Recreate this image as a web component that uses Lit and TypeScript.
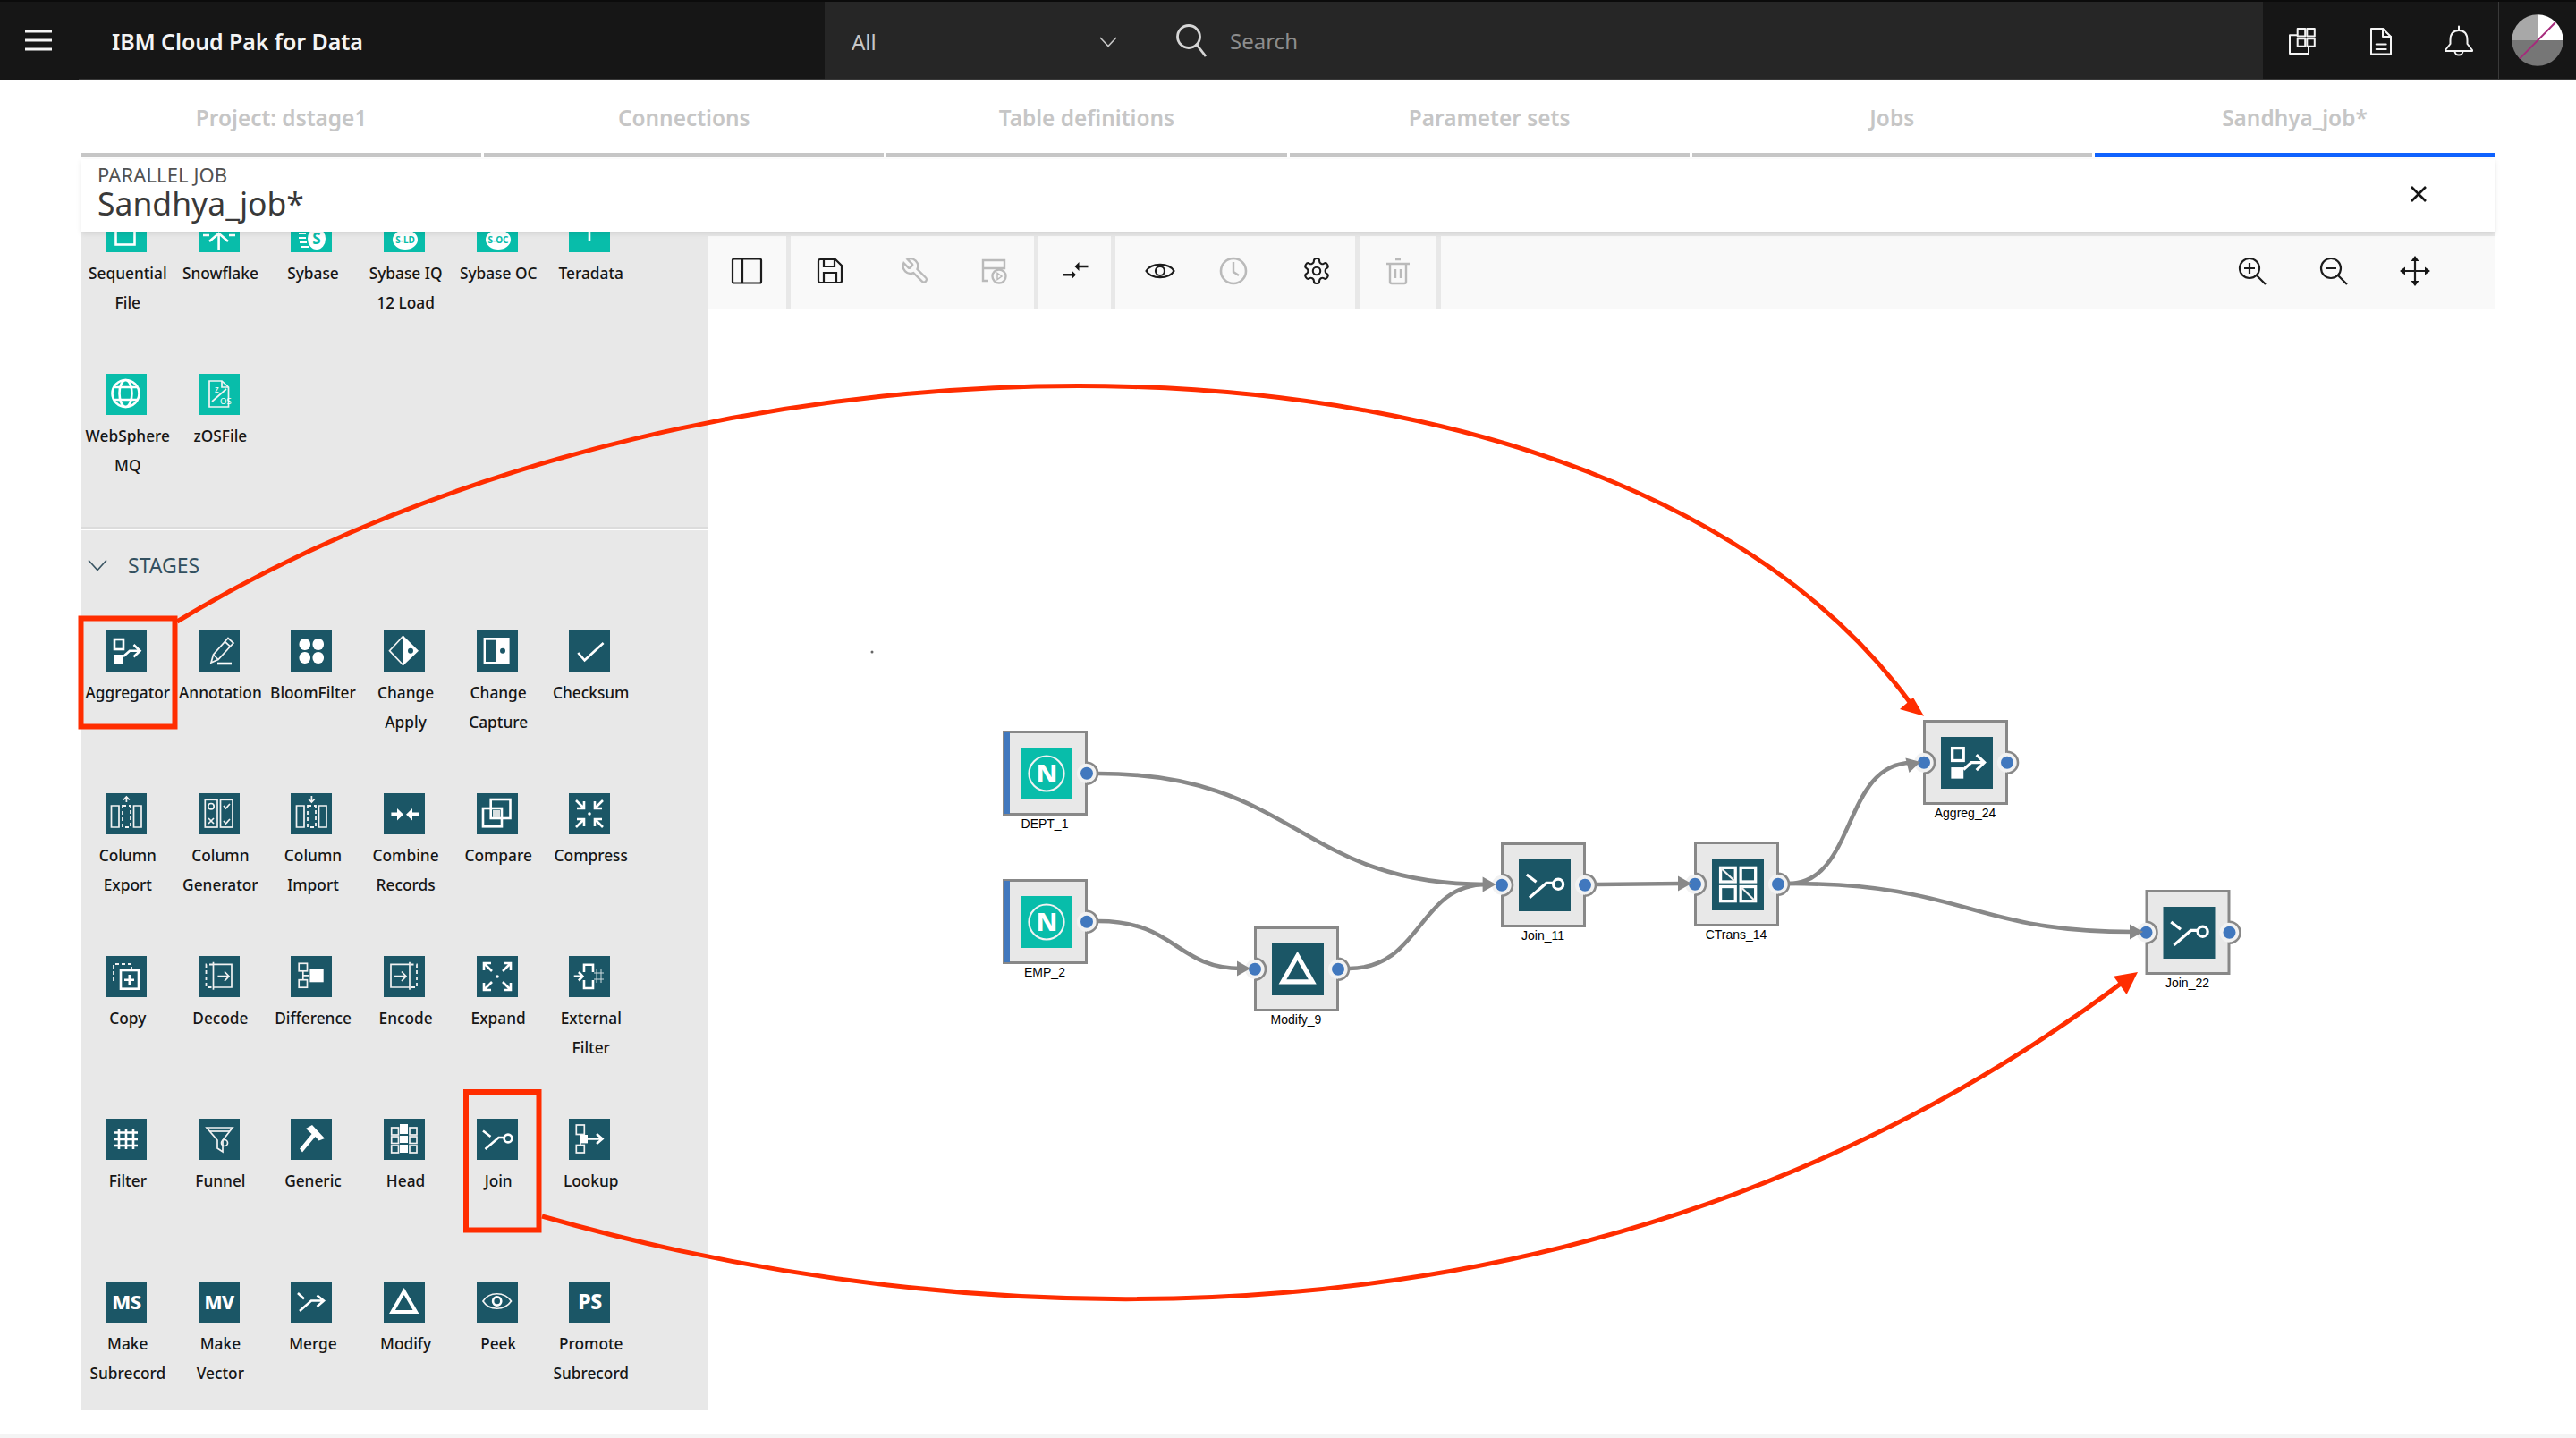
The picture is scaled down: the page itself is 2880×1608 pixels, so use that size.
import { LitElement, html, css, svg } from "lit";
import { customElement } from "lit/decorators.js";

const s = (strings: TemplateStringsArray, ...v: unknown[]) => svg(strings, ...v);

const ICONS: Record<string, unknown> = {
  seq: s`<rect class="l" x="11.5" y="8" width="21" height="29.5"/>`,
  snow: s`<path class="l" d="M22.6 24V44M12 34L22.6 25L33 34M5 27H12M34 27H41"/>`,
  sybase: s`<ellipse class="f" cx="29" cy="31" rx="10" ry="12"/><path class="t" d="M9 25H17M9 30H17M10 35H18M12 40H20"/><text class="it" x="29" y="37" font-size="17">S</text>`,
  sybaseiq: s`<ellipse class="f" cx="24" cy="32" rx="14" ry="11"/><text class="it" x="24" y="36" font-size="10">S-LD</text>`,
  sybaseoc: s`<ellipse class="f" cx="24" cy="32" rx="14" ry="11"/><text class="it" x="24" y="36" font-size="10">S-OC</text>`,
  teradata: s`<path class="l" d="M12 12H34M23 12V33"/>`,
  web: s`<circle class="l" cx="22.5" cy="22" r="15"/><ellipse class="l" cx="22.5" cy="22" rx="7" ry="15"/><path class="l" d="M9 15H36M9 29H36"/>`,
  zos: s`<path class="n" d="M12 8H26L33.5 15V37H12Z"/><path class="n" d="M26 8V15H33.5M15 31L31 17"/><text class="wt" x="18" y="21" font-size="10">z</text><text class="wt" x="24" y="34" font-size="9.5">OS</text>`,
  agg: s`<rect class="l" x="10" y="10" width="10" height="11"/><rect class="f" x="9" y="27" width="11" height="10"/><path class="l" d="M20 29L27 22.7H38M31.5 16L38.5 22.7L31.5 29.5"/>`,
  ann: s`<path class="n" d="M14 36L16.5 27L33 8.5L39 14L22 32.5ZM16.5 27L22 32.5M29.5 12.5L35.5 18"/><path class="l" d="M21 37H37"/>`,
  bloom: s`<rect class="f" x="9.5" y="9" width="12.5" height="13" rx="6"/><rect class="f" x="24.5" y="9" width="12.5" height="13" rx="6"/><rect class="f" x="9.5" y="24" width="12.5" height="13" rx="6"/><rect class="f" x="24.5" y="24" width="12.5" height="13" rx="6"/>`,
  apply: s`<path class="n" d="M22 6L6.5 22.7L22 39"/><path class="f" d="M22 6L39 22.7L22 39Z"/><circle class="d" cx="30" cy="22.7" r="3"/>`,
  capture: s`<rect class="f" x="7.6" y="8" width="29" height="29.7"/><rect class="d" x="10" y="10.7" width="12" height="24.3"/><circle class="d" cx="29" cy="22.7" r="3"/>`,
  check: s`<path class="l" d="M10.3 25L17.6 33.3L38.6 14"/>`,
  colexp: s`<path class="n" d="M6.5 14H15V38H6.5ZM31.5 14H40V38H31.5Z"/><path class="dash" d="M19 14H28V38H19Z"/><path class="n" d="M23.4 10V4M20 7.5L23.4 4L26.8 7.5"/>`,
  colgen: s`<rect class="n" x="7.3" y="7.3" width="13.7" height="30.7"/><rect class="n" x="24.5" y="7.3" width="13.5" height="30.7"/><circle class="n" cx="14" cy="14.7" r="3.2"/><path class="n" d="M11 28L17 34M17 28L11 34M28 14L30.5 17L35 12M28 31L30.5 34L35 29"/>`,
  colimp: s`<path class="n" d="M6.5 14H15V38H6.5ZM31.5 14H40V38H31.5Z"/><path class="dash" d="M19 14H28V38H19Z"/><path class="n" d="M23.4 3V9.5M20 6.5L23.4 10L26.8 6.5"/>`,
  combine: s`<path class="f" d="M8.4 21.5H15V17L22 23.7L15 30.5V26H8.4ZM39 21.5H32V17L25 23.7L32 30.5V26H39Z"/>`,
  compare: s`<rect class="l" x="15.7" y="7" width="21.8" height="21"/><rect class="l" x="7" y="17" width="21" height="20.3"/><rect class="p" x="18" y="19" width="8" height="8"/>`,
  compress: s`<path class="l" d="M8 8L17 17M17 9V17H9M38 8L29 17M29 9V17H37M8 38L17 29M17 37V29H9M38 38L29 29M29 37V29H37"/><circle class="f" cx="23" cy="23" r="1.8"/>`,
  copy: s`<path class="dash" d="M9 28V9H29V14"/><rect class="l" x="17" y="16" width="20" height="20.7"/><path class="l" d="M26.8 21V32M21 26.7H32"/>`,
  decode: s`<path class="dash" d="M16 9.5H8.5V35H16"/><path class="n" d="M16.5 6.7V37.7M16.5 9.3H37V35H16.5M21.4 22.7H34M29 17.5L34 22.7L29 28"/>`,
  diff: s`<rect class="n" x="9.2" y="8.3" width="9.3" height="8.5"/><rect class="n" x="9.2" y="26.7" width="9.3" height="8.5"/><path class="n" d="M13.8 17V26.7M13.8 21.8H21"/><rect class="f" x="21.4" y="14.3" width="15.3" height="15"/>`,
  encode: s`<path class="dash" d="M29.5 9.5H37V35H29.5"/><path class="n" d="M29 6.7V37.7M29 9.3H8V35H29M12 22.7H25M20 17.5L25 22.7L20 28"/>`,
  expand: s`<path class="l" d="M17 17L8 8M8 16V8H16M29 17L38 8M38 16V8H30M17 29L8 38M8 30V38H16M29 29L38 38M38 30V38H30"/><circle class="f" cx="23" cy="23" r="1.8"/>`,
  ext: s`<path class="l" d="M5.7 22.7H15M11 18L15.4 22.7L11 27.5M17 18V9.7H27V18M17 27V36H27V27"/><path class="thin" d="M28 19H39M28 26H39M31 15V30M36 15V30"/>`,
  filter: s`<path class="l" d="M15 11V34M23 11V34M31 11V34M10 15.5H36M10 23H36M10 30H36"/>`,
  funnel: s`<path class="n" d="M9 10H38L27 24V37L21 33V24Z"/><path class="n" d="M12 14H35"/><circle class="n" cx="29" cy="27" r="3.5"/>`,
  generic: s`<path class="f" d="M17 11L24 7L38 22L31.5 24.5L27.5 20L13 37.5L10 33.5L23.5 17Z"/>`,
  head: s`<rect class="n" x="8.7" y="10" width="7.8" height="8"/><rect class="n" x="8.7" y="20" width="7.8" height="7.5"/><rect class="n" x="8.7" y="30" width="7.8" height="8"/><rect class="f" x="18" y="6" width="9" height="11"/><rect class="f" x="18" y="19" width="9" height="8"/><rect class="f" x="18" y="29" width="9" height="9"/><rect class="n" x="29" y="10" width="8" height="8"/><rect class="n" x="29" y="20" width="8" height="7.5"/><rect class="n" x="29" y="30" width="8" height="8"/>`,
  join: s`<path class="l" d="M7 13.5L15.5 20M9.5 34L24.5 21H31"/><circle class="l" cx="35" cy="22" r="4.4"/>`,
  lookup: s`<rect class="n" x="8.3" y="7" width="9" height="10.5"/><rect class="n" x="8.3" y="29.5" width="9" height="8.5"/><path class="n" d="M13 17.5V29.5"/><rect class="f" x="12" y="18" width="9" height="9.4"/><path class="l" d="M21 22.5H37M31 17L37.5 22.5L31 28"/>`,
  ms: s`<text class="wb" x="23.5" y="31" font-size="22">MS</text>`,
  mv: s`<text class="wb" x="23" y="31" font-size="21">MV</text>`,
  merge: s`<path class="l" d="M8 13L15 19.5M10 33L23 21.5H36M29.5 15.5L37 21.5L29.5 28"/>`,
  modify: s`<path class="tr" d="M22.7 11L36 34H9.5Z"/>`,
  peek: s`<path class="n" d="M7 22C14 11 31 11 38.5 22C31 33 14 33 7 22Z"/><circle class="l" cx="22.7" cy="22" r="4.6"/>`,
  ps: s`<text class="wb" x="23.5" y="31" font-size="23">PS</text>`,
  ctrans: s`<rect class="l" x="7.6" y="8.2" width="13.2" height="12.4"/><rect class="l" x="25.5" y="8.2" width="13.1" height="12.4"/><rect class="l" x="7.6" y="25" width="13.2" height="12.8"/><rect class="l" x="25.5" y="25" width="13.1" height="12.8"/><path class="n" d="M8 8.5L20.5 20.5M26 25.5L38 37.5"/>`,
  nn: s`<circle class="n" cx="23" cy="23" r="15.5"/><text class="wb" x="23" y="31" font-size="23">N</text>`,
};

const CONNECTORS = [
  ["Sequential\nFile", "seq"], ["Snowflake", "snow"], ["Sybase", "sybase"], ["Sybase IQ\n12 Load", "sybaseiq"], ["Sybase OC", "sybaseoc"], ["Teradata", "teradata"],
  ["WebSphere\nMQ", "web"], ["zOSFile", "zos"],
];
const STAGES = [
  ["Aggregator", "agg"], ["Annotation", "ann"], ["BloomFilter", "bloom"], ["Change\nApply", "apply"], ["Change\nCapture", "capture"], ["Checksum", "check"],
  ["Column\nExport", "colexp"], ["Column\nGenerator", "colgen"], ["Column\nImport", "colimp"], ["Combine\nRecords", "combine"], ["Compare", "compare"], ["Compress", "compress"],
  ["Copy", "copy"], ["Decode", "decode"], ["Difference", "diff"], ["Encode", "encode"], ["Expand", "expand"], ["External\nFilter", "ext"],
  ["Filter", "filter"], ["Funnel", "funnel"], ["Generic", "generic"], ["Head", "head"], ["Join", "join"], ["Lookup", "lookup"],
  ["Make\nSubrecord", "ms"], ["Make\nVector", "mv"], ["Merge", "merge"], ["Modify", "modify"], ["Peek", "peek"], ["Promote\nSubrecord", "ps"],
];
const TABS = ["Project: dstage1", "Connections", "Table definitions", "Parameter sets", "Jobs", "Sandhya_job*"];

const NODES: { x: number; y: number; name: string; icon: string; src?: boolean }[] = [
  { x: 1121, y: 817, name: "DEPT_1", icon: "nn", src: true },
  { x: 1121, y: 983, name: "EMP_2", icon: "nn", src: true },
  { x: 1402, y: 1036, name: "Modify_9", icon: "modify" },
  { x: 1678, y: 942, name: "Join_11", icon: "join" },
  { x: 1894, y: 941, name: "CTrans_14", icon: "ctrans" },
  { x: 2150, y: 805, name: "Aggreg_24", icon: "agg" },
  { x: 2398.5, y: 995, name: "Join_22", icon: "join" },
];

const LINKS = [
  "M1228 865C1450 865 1450 989 1662 989",
  "M1228 1030C1315 1030 1315 1083 1388 1083",
  "M1508 1083C1590 1083 1585 989 1662 989",
  "M1785 989L1880 988",
  "M2000 988C2075 988 2060 853 2137 853",
  "M2000 988C2200 988 2200 1042 2385 1042",
];
const HEADS: [number, number, number][] = [[1672.6, 989, 0], [1398, 1083, 0], [1891, 988, 0], [2147, 852, -14], [2396, 1042, 0]];

function port(cx: number, cy: number) {
  return svg`<circle class="port-bg" cx=${cx} cy=${cy} r="11"/>
    <path class="port-arc" d="M${cx} ${cy - 12}A12 12 0 0 1 ${cx} ${cy + 12}"/>
    <circle class="port-dot" cx=${cx} cy=${cy} r="7"/>`;
}

function node(n: (typeof NODES)[number]) {
  const cy = n.y + 47.7;
  return svg`<g>
    <rect class="node-box" x=${n.x + 1.5} y=${n.y + 1.5} width="92" height="92"/>
    ${n.src ? svg`<rect class="node-bar" x=${n.x + 1} y=${n.y + 2} width="7" height="91"/>` : ""}
    <rect class=${n.src ? "tile-teal" : "tile-dark"} x=${n.x + 20} y=${n.y + 19} width="58" height="58"/>
    <svg class="ic" x=${n.x + 20} y=${n.y + 19} width="58" height="58" viewBox="0 0 46 46">${ICONS[n.icon]}</svg>
    <text class="node-label" x=${n.x + 47} y=${n.y + 109}>${n.name}</text>
    ${n.src ? "" : port(n.x + 1, cy)}
    ${port(n.x + 94, cy)}
  </g>`;
}

function ti(cls: string, body: unknown, extra = "") {
  return html`<span class="tb-ic ${cls} ${extra}"><svg width="40" height="40" viewBox="0 0 40 40">${body}</svg></span>`;
}

@customElement("app-root")
export class AppRoot extends LitElement {
  static styles = css`
    :host { display: block; position: relative; width: 100%; height: 1608px; overflow: hidden; background: #fff; font-family: "Noto Sans", sans-serif; }
    .page { display: flex; flex-direction: column; height: 100%; }
    .topbar { display: flex; height: 89px; box-sizing: border-box; background: #161616; border-top: 2px solid #0b0b0b; flex: none; color: #f4f4f4; position: relative; }
    .topbar::after { content: ""; position: absolute; left: 88px; right: 0; bottom: 0; height: 1px; background: #393939; }
    .menu { width: 88px; display: flex; align-items: center; justify-content: center; padding-bottom: 2px; box-sizing: border-box; padding-right: 2px; }
    .brand { width: 834px; font-size: 25px; font-weight: 600; display: flex; align-items: center; padding-left: 37px; box-sizing: border-box; letter-spacing: -0.1px; }
    .scope { width: 362px; box-sizing: border-box; background: #262626; border-right: 1px solid #161616; display: flex; align-items: center; justify-content: space-between; padding: 2px 34px 0 30px; color: #c6c6c6; font-size: 24px; }
    .search { flex: 1; background: #262626; display: flex; align-items: center; padding-left: 30px; gap: 25px; color: #8d8d8d; font-size: 24px; }
    .actions { width: 263px; display: flex; }
    .actions span { flex: 1; display: flex; align-items: center; justify-content: center; }
    .avatar { width: 87px; border-left: 1px solid #393939; box-sizing: border-box; display: flex; align-items: center; justify-content: center; padding-bottom: 2px; }
    .tabs { display: flex; gap: 3px; margin: 0 91px; height: 87px; flex: none; }
    .tab { flex: 1; border-bottom: 5px solid #c6c6c6; color: #c6c6c6; font-size: 24.4px; font-weight: 600; display: flex; align-items: center; justify-content: center; padding-top: 2px; box-sizing: border-box; }
    .tab.on { border-bottom-color: #0f62fe; }
    .card { margin: 2px 91px 0; height: 81px; background: #fff; box-shadow: 0 2px 6px rgba(0,0,0,.1); display: flex; justify-content: space-between; align-items: center; padding: 0 65px 0 18px; box-sizing: border-box; flex: none; position: relative; z-index: 2; }
    .titles { padding-bottom: 8px; }
    .closex { margin-bottom: 3px; }
    .kicker { font-size: 22px; line-height: 24px; color: #525252; letter-spacing: .1px; }
    .name { font-size: 35.5px; line-height: 40px; color: #393939; }
    .main { display: flex; margin: 0 91px; height: 1318px; flex: none; }
    .palette { width: 700px; background: #e8e8e8; overflow: hidden; flex: none; }
    .conn { display: flow-root; height: 330px; border-bottom: 3px solid #dcdcdc; box-shadow: 0 1px 0 #fff; }
    .grid { display: grid; grid-template-columns: repeat(6, 103.6px); grid-auto-rows: 182px; }
    .conn .grid { margin-top: -23px; }
    .stage-head { height: 80px; display: flex; align-items: center; color: #33505f; font-size: 23px; gap: 23px; padding-left: 7px; margin-bottom: 33px; }
    .cell { display: flex; flex-direction: column; align-items: center; overflow: hidden; }
    .tile { width: 46px; height: 46px; margin-right: 3px; flex: none; display: block; }
    .tile.teal { background: #08bdaa; }
    .tile.dark { background: #1b5666; }
    .lab { margin-top: 6.5px; font-size: 17.3px; line-height: 33px; font-weight: 500; text-align: center; white-space: pre-line; color: #161616; }
    .right { flex: 1; display: flex; flex-direction: column; }
    .strip { height: 5px; background: #e8e8e8; margin-left: 1px; }
    .toolbar { height: 82px; margin-left: 1px; background: #f9f9f9; display: flex; align-items: stretch; border-bottom: 1px solid #f0f0f0; box-sizing: border-box; }
    .grp { display: flex; border-right: 5px solid #e8e8e8; align-items: center; padding-bottom: 3px; box-sizing: content-box; }
    .g1 { width: 85px; padding-right: 2px; justify-content: center; }
    .g2 { width: 272px; }
    .g3 { width: 81px; justify-content: center; }
    .g4 { width: 268px; }
    .g5 { width: 86px; justify-content: center; }
    .zoomers { margin-left: auto; display: flex; align-items: center; gap: 51px; padding: 0 69px 3px 0; }
    .tb-ic { width: 40px; height: 40px; display: block; flex: none; }
    .tb-ic svg { display: block; }
    .m1 { margin-left: 24px; } .m2 { margin-left: 52px; } .m3 { margin-left: 51px; }
    .m4 { margin-left: 30px; } .m5 { margin-left: 42px; } .m6 { margin-left: 53px; }
    .k { fill: none; stroke: #1c1c1c; stroke-width: 2.2; }
    .g { fill: none; stroke: #bababa; stroke-width: 2.4; }
    .kf { fill: #161616; stroke: none; }
    .w { fill: none; stroke: #f4f4f4; stroke-width: 2; stroke-linejoin: round; stroke-linecap: round; }
    .canvas { flex: 1; background: #fff; }
    .foot { height: 4px; background: #f4f4f4; margin-top: 27px; flex: none; }
    .overlay { position: absolute; left: 0; top: 0; z-index: 3; pointer-events: none; }
    .ic { overflow: visible; }
    .l { fill: none; stroke: #fff; stroke-width: 2.6; }
    .n { fill: none; stroke: #f2f2f2; stroke-width: 1.7; }
    .f { fill: #fff; stroke: none; }
    .d { fill: #1b5666; stroke: none; }
    .p { fill: #d9dfe0; stroke: none; }
    .t { fill: none; stroke: #fff; stroke-width: 2; }
    .dash { fill: none; stroke: #f2f2f2; stroke-width: 1.8; stroke-dasharray: 4 3; }
    .thin { fill: none; stroke: #cfdcdf; stroke-width: 1; }
    .tr { fill: none; stroke: #fff; stroke-width: 4; stroke-linejoin: miter; }
    .it { font-family: "Noto Sans", sans-serif; font-weight: 700; fill: #08bdaa; text-anchor: middle; }
    .wt { font-family: "Noto Sans", sans-serif; fill: #fff; }
    .wb { font-family: "Noto Sans", sans-serif; font-weight: 800; fill: #fff; text-anchor: middle; letter-spacing: -0.5px; }
    .node-box { fill: #e8e8e8; stroke: #888; stroke-width: 3; }
    .node-bar { fill: #4178be; }
    .tile-teal { fill: #08bdaa; }
    .tile-dark { fill: #1b5666; }
    .node-label { font-family: "Liberation Sans", sans-serif; font-size: 14px; fill: #000; text-anchor: middle; }
    .port-bg { fill: #f2f2f2; }
    .port-arc { fill: none; stroke: #888; stroke-width: 2.6; }
    .port-dot { fill: #4178be; }
    .link { fill: none; stroke: #888; stroke-width: 4.6; }
    .head { fill: #888; }
    .red { fill: none; stroke: #ff2d00; stroke-width: 6; }
    .redl { fill: none; stroke: #ff2d00; stroke-width: 5; }
    .redf { fill: #ff2d00; }
    .speck { fill: #666; }
  `;

  private cell(label: string, icon: string, cls: string) {
    return html`<div class="cell">
      <svg class="tile ${cls} ic" viewBox="0 0 46 46">${ICONS[icon]}</svg>
      <div class="lab">${label}</div>
    </div>`;
  }

  render() {
    return html`<div class="page">
      <header class="topbar">
        <div class="menu"><svg width="30" height="24" viewBox="0 0 30 24"><path d="M0 2H30M0 12H30M0 22H30" stroke="#f4f4f4" stroke-width="3"/></svg></div>
        <div class="brand">IBM Cloud Pak for Data</div>
        <div class="scope"><span>All</span><svg width="20" height="12" viewBox="0 0 20 12"><path d="M1 1L10 10.5L19 1" fill="none" stroke="#c6c6c6" stroke-width="1.6"/></svg></div>
        <div class="search"><svg width="36" height="38" viewBox="0 0 36 38"><circle cx="15" cy="14" r="12.5" fill="none" stroke="#d6d6d6" stroke-width="2.8"/><path d="M24 23L34 36" stroke="#d6d6d6" stroke-width="2.8"/></svg><span>Search</span></div>
        <div class="actions">
          <span><svg width="40" height="40" viewBox="0 0 40 40"><rect class="w" x="14.7" y="6" width="8.5" height="8.5"/><rect class="w" x="25.3" y="6" width="8.5" height="8.5"/><rect class="w" x="14.7" y="17.3" width="8.5" height="8.5"/><rect class="w" x="25.3" y="17.3" width="8.5" height="8.5"/><path class="w" d="M14 13.3H6V34H27V26.7"/></svg></span>
          <span><svg width="40" height="40" viewBox="0 0 40 40"><path class="w" d="M9 6H22L31 15V34.5H9Z"/><path class="w" d="M22 6V15H31M14.7 23.5H25.7M14.7 29H25.7"/></svg></span>
          <span><svg width="40" height="40" viewBox="0 0 40 40"><path class="w" d="M20 8C13 8 10.5 13 10.5 19V23L5 30V31H35V30L29.5 23V19C29.5 13 27 8 20 8ZM20 3.5V8M15.5 31A4.5 4.5 0 0 0 24.5 31"/></svg></span>
        </div>
        <div class="avatar"><svg width="58" height="58" viewBox="-29 -29 58 58"><path d="M-28.7 0A28.7 28.7 0 0 1 0 -28.7V0Z" fill="#a8a8a8"/><path d="M0 -28.7A28.7 28.7 0 0 1 28.7 0H0Z" fill="#fff"/><path d="M-28.7 0H28.7A28.7 28.7 0 0 1 -28.7 0Z" fill="#767676"/><path d="M20 -20L-20 20.6" stroke="#a62a7c" stroke-width="2"/></svg></div>
      </header>
      <nav class="tabs">${TABS.map((t, i) => html`<div class="tab ${i === 5 ? "on" : ""}">${t}</div>`)}</nav>
      <section class="card">
        <div class="titles"><div class="kicker">PARALLEL JOB</div><div class="name">Sandhya_job*</div></div>
        <svg class="closex" width="40" height="40" viewBox="0 0 40 40"><path d="M12 12L28 28M28 12L12 28" stroke="#161616" stroke-width="2.6"/></svg>
      </section>
      <div class="main">
        <aside class="palette">
          <div class="conn"><div class="grid">${CONNECTORS.map(([l, ic]) => this.cell(l, ic, "teal"))}</div></div>
          <div class="stage-head"><svg width="22" height="14" viewBox="0 0 22 14"><path d="M1 1.5L11 12.5L21 1.5" fill="none" stroke="#3a5563" stroke-width="1.6"/></svg><span>STAGES</span></div>
          <div class="grid">${STAGES.map(([l, ic]) => this.cell(l, ic, "dark"))}</div>
        </aside>
        <div class="right">
          <div class="strip"></div>
          <div class="toolbar">
            <div class="grp g1">${ti("", svg`<rect class="k" x="4" y="6.5" width="32" height="27" rx="1.5"/><path class="k" d="M15 6.5V33.5"/>`)}</div>
            <div class="grp g2">
              ${ti("m1", svg`<path class="k" d="M9 7H26L33 14V31A2 2 0 0 1 31 33H9A2 2 0 0 1 7 31V9A2 2 0 0 1 9 7ZM13 7V15H25V7M13 33V22H27V33"/>`)}
              ${ti("m2", svg`<g transform="translate(40 3.5) scale(-1.38 1.38)"><path class="g" style="stroke-width:1.7" d="M14.7 6.3a1 1 0 0 0 0 1.4l1.6 1.6a1 1 0 0 0 1.4 0l3.77-3.77a6 6 0 0 1-7.94 7.94l-6.91 6.91a2.12 2.12 0 0 1-3-3l6.91-6.91a6 6 0 0 1 7.94-7.94l-3.76 3.76z"/></g>`)}
              ${ti("m3", svg`<path class="g" d="M8 8H32V17H8ZM8 17V31H14M32 17V18"/><circle class="g" cx="26" cy="26" r="7.5"/><path class="g" style="stroke-width:1.5" d="M24 22.5V29.5L29 26Z"/>`)}
            </div>
            <div class="grp g3">${ti("", svg`<path class="k" d="M6 24.3H17M34.5 15H24" style="stroke-width:2.6"/><path class="kf" d="M21 24.3L16 19.3V29.3ZM19.5 15L24.5 10V20Z"/>`)}</div>
            <div class="grp g4">
              ${ti("m4", svg`<path class="k" d="M4.5 20C10 10.5 30 10.5 35.5 20C30 29.5 10 29.5 4.5 20Z"/><circle class="k" cx="20" cy="20" r="5"/>`)}
              ${ti("m5", svg`<circle class="g" cx="20" cy="20" r="14" style="stroke-width:2.6"/><path class="g" d="M20 10V21L26 25"/>`)}
              ${ti("m6", svg`<g transform="translate(3.2 3.2) scale(1.4)"><path class="k" style="stroke-width:1.5" d="M12.22 2h-.44a2 2 0 0 0-2 2v.18a2 2 0 0 1-1 1.73l-.43.25a2 2 0 0 1-2 0l-.15-.08a2 2 0 0 0-2.73.73l-.22.38a2 2 0 0 0 .73 2.73l.15.1a2 2 0 0 1 1 1.72v.51a2 2 0 0 1-1 1.74l-.15.09a2 2 0 0 0-.73 2.73l.22.38a2 2 0 0 0 2.73.73l.15-.08a2 2 0 0 1 2 0l.43.25a2 2 0 0 1 1 1.73V20a2 2 0 0 0 2 2h.44a2 2 0 0 0 2-2v-.18a2 2 0 0 1 1-1.73l.43-.25a2 2 0 0 1 2 0l.15.08a2 2 0 0 0 2.73-.73l.22-.39a2 2 0 0 0-.73-2.73l-.15-.08a2 2 0 0 1-1-1.74v-.5a2 2 0 0 1 1-1.74l.15-.09a2 2 0 0 0 .73-2.73l-.22-.38a2 2 0 0 0-2.73-.73l-.15.08a2 2 0 0 1-2 0l-.43-.25a2 2 0 0 1-1-1.73V4a2 2 0 0 0-2-2z"/><circle class="k" style="stroke-width:1.5" cx="12" cy="12" r="3"/></g>`)}
            </div>
            <div class="grp g5">${ti("", svg`<path class="g" d="M7 12H33M17 7H23M11 12V32A2 2 0 0 0 13 34H27A2 2 0 0 0 29 32V12M17 18V28M23 18V28"/>`)}</div>
            <div class="zoomers">
              ${ti("", svg`<circle class="k" cx="17" cy="17" r="11"/><path class="k" d="M25 25L35 35M17 11V23M11 17H23"/>`)}
              ${ti("", svg`<circle class="k" cx="17" cy="17" r="11"/><path class="k" d="M25 25L35 35M11 17H23"/>`)}
              ${ti("", svg`<path class="k" d="M20 5V35M5 20H35"/><path class="kf" d="M20 3L15.5 9H24.5ZM20 37L15.5 31H24.5ZM3 20L9 15.5V24.5ZM37 20L31 15.5V24.5Z"/>`)}
            </div>
          </div>
          <div class="canvas"></div>
        </div>
      </div>
      <div class="foot"></div>

      <svg class="overlay" width="2880" height="1608" viewBox="0 0 2880 1608">
        <circle class="speck" cx="975" cy="729" r="1.5"/>
        ${NODES.map(node)}
        ${LINKS.map((d) => svg`<path class="link" d=${d}/>`)}
        ${HEADS.map(([x, y, a]) => svg`<path class="head" transform="rotate(${a} ${x} ${y})" d="M${x} ${y}L${x - 15} ${y - 8.5}V${y + 8.5}Z"/>`)}
        <rect class="red" x="90.5" y="691.5" width="105" height="121"/>
        <rect class="red" x="521" y="1221" width="81.5" height="154.5"/>
        <path class="redl" d="M198 695C800 330 1800 330 2135 785"/>
        <path class="redf" d="M2151 800.7L2124 793L2139 780Z"/>
        <path class="redl" d="M606 1360C1060 1490 1780 1545 2375 1097"/>
        <path class="redf" d="M2390 1087L2363 1091.7L2377.6 1112Z"/>
      </svg>
    </div>`;
  }
}
